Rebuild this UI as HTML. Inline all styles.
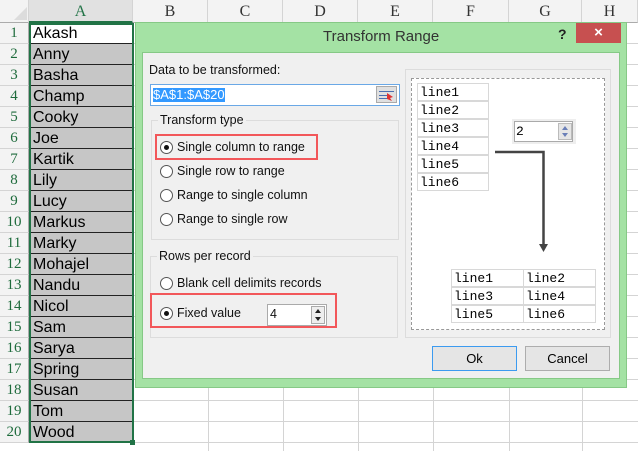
<!DOCTYPE html>
<html><head><style>
*{margin:0;padding:0;box-sizing:border-box}
html,body{width:638px;height:451px;overflow:hidden}
body{background:#fff;position:relative;font-family:"Liberation Sans",sans-serif}
.a{position:absolute}
.rh{position:absolute;left:0;width:29px;height:21px;background:#f3f3f3;border-bottom:1px solid #d4d4d4;border-right:1px solid #ababab;font-family:"Liberation Serif",serif;font-size:15px;color:#1e6b3c;text-align:center;line-height:21px}
.ch{position:absolute;top:0;height:23px;background:#f3f3f3;border-right:1px solid #d4d4d4;border-bottom:1px solid #ababab;font-family:"Liberation Serif",serif;font-size:16px;color:#333;text-align:center;line-height:23px}
.ce{position:absolute;left:29px;width:104px;height:21px;background:#c6c6c6;border-bottom:1px solid #222;font-size:16px;line-height:21px;padding-left:4px;color:#000}
.t{position:absolute;font-size:12.5px;color:#111;white-space:nowrap}
.rd{position:absolute;width:13px;height:13px;border:1px solid #555;border-radius:50%;background:#fff}
.rd.on:after{content:"";position:absolute;left:3px;top:3px;width:5px;height:5px;border-radius:50%;background:#111}
.m{font-family:"Liberation Mono",monospace;font-size:13px;color:#000}
.lc{position:absolute;border:1px solid #d8d8d8;height:18px;line-height:18px;padding-left:2px}
</style></head><body>
<div class="ch" style="left:0;width:29px"></div>
<svg class="a" style="left:14px;top:7px" width="13" height="13"><polygon points="13,0 13,13 0,13" fill="#dcdcdc"/></svg>
<div class="ch" style="left:29px;width:104px;background:#e1e1e1;border-bottom:2px solid #217346;color:#217346">A</div>
<div class="ch" style="left:133px;width:75px">B</div>
<div class="ch" style="left:208px;width:75px">C</div>
<div class="ch" style="left:283px;width:75px">D</div>
<div class="ch" style="left:358px;width:75px">E</div>
<div class="ch" style="left:433px;width:76px">F</div>
<div class="ch" style="left:509px;width:73px">G</div>
<div class="ch" style="left:582px;width:56px">H</div>
<svg class="a" style="left:133px;top:23px" width="505" height="428">
<g stroke="#d4d4d4" stroke-width="1">
<line x1="75.5" y1="0" x2="75.5" y2="429"/><line x1="150.5" y1="0" x2="150.5" y2="429"/><line x1="225.5" y1="0" x2="225.5" y2="429"/><line x1="300.5" y1="0" x2="300.5" y2="429"/><line x1="376.5" y1="0" x2="376.5" y2="429"/><line x1="449.5" y1="0" x2="449.5" y2="429"/>
<line x1="0" y1="20.5" x2="505" y2="20.5"/><line x1="0" y1="41.5" x2="505" y2="41.5"/><line x1="0" y1="62.5" x2="505" y2="62.5"/><line x1="0" y1="83.5" x2="505" y2="83.5"/><line x1="0" y1="104.5" x2="505" y2="104.5"/><line x1="0" y1="125.5" x2="505" y2="125.5"/><line x1="0" y1="146.5" x2="505" y2="146.5"/><line x1="0" y1="167.5" x2="505" y2="167.5"/><line x1="0" y1="188.5" x2="505" y2="188.5"/><line x1="0" y1="209.5" x2="505" y2="209.5"/><line x1="0" y1="230.5" x2="505" y2="230.5"/><line x1="0" y1="251.5" x2="505" y2="251.5"/><line x1="0" y1="272.5" x2="505" y2="272.5"/><line x1="0" y1="293.5" x2="505" y2="293.5"/><line x1="0" y1="314.5" x2="505" y2="314.5"/><line x1="0" y1="335.5" x2="505" y2="335.5"/><line x1="0" y1="356.5" x2="505" y2="356.5"/><line x1="0" y1="377.5" x2="505" y2="377.5"/><line x1="0" y1="398.5" x2="505" y2="398.5"/><line x1="0" y1="419.5" x2="505" y2="419.5"/>
</g></svg>
<div class="rh" style="top:23px">1</div><div class="rh" style="top:44px">2</div><div class="rh" style="top:65px">3</div><div class="rh" style="top:86px">4</div><div class="rh" style="top:107px">5</div><div class="rh" style="top:128px">6</div><div class="rh" style="top:149px">7</div><div class="rh" style="top:170px">8</div><div class="rh" style="top:191px">9</div><div class="rh" style="top:212px">10</div><div class="rh" style="top:233px">11</div><div class="rh" style="top:254px">12</div><div class="rh" style="top:275px">13</div><div class="rh" style="top:296px">14</div><div class="rh" style="top:317px">15</div><div class="rh" style="top:338px">16</div><div class="rh" style="top:359px">17</div><div class="rh" style="top:380px">18</div><div class="rh" style="top:401px">19</div><div class="rh" style="top:422px">20</div>
<div class="ce" style="top:23px;background:#fff">Akash</div>
<div class="ce" style="top:44px">Anny</div><div class="ce" style="top:65px">Basha</div><div class="ce" style="top:86px">Champ</div><div class="ce" style="top:107px">Cooky</div><div class="ce" style="top:128px">Joe</div><div class="ce" style="top:149px">Kartik</div><div class="ce" style="top:170px">Lily</div><div class="ce" style="top:191px">Lucy</div><div class="ce" style="top:212px">Markus</div><div class="ce" style="top:233px">Marky</div><div class="ce" style="top:254px">Mohajel</div><div class="ce" style="top:275px">Nandu</div><div class="ce" style="top:296px">Nicol</div><div class="ce" style="top:317px">Sam</div><div class="ce" style="top:338px">Sarya</div><div class="ce" style="top:359px">Spring</div><div class="ce" style="top:380px">Susan</div><div class="ce" style="top:401px">Tom</div><div class="ce" style="top:422px">Wood</div>
<div class="a" style="left:29px;top:23px;width:105px;height:420px;border:2px solid #217346"></div>
<div class="a" style="left:130px;top:440px;width:5px;height:5px;background:#217346"></div>
<!-- dialog -->
<div class="a" style="left:135px;top:22px;width:492px;height:366px;background:#a4e2a4;border:1px solid #86c986"></div>
<div class="a" style="left:142px;top:52px;width:478px;height:327px;background:#f0f0f0;border:1px solid #86c986"></div>
<div class="t" style="left:323px;top:28px;font-size:15px;color:#333">Transform Range</div>
<div class="t" style="left:558px;top:26px;font-size:14px;font-weight:bold;color:#222">?</div>
<div class="a" style="left:576px;top:23px;width:45px;height:20px;background:#c75050;color:#fff;text-align:center;font-size:15px;line-height:20px;font-weight:bold">×</div>
<div class="t" style="left:149px;top:63px">Data to be transformed:</div>
<div class="a" style="left:150px;top:84px;width:250px;height:22px;background:#fff;border:1px solid #6aa8e6"></div>
<div class="a" style="left:153px;top:88px;width:72px;height:14px;background:#3399ff"></div>
<div class="t" style="left:153px;top:87px;color:#fff;font-size:13px">$A$1:$A$20</div>
<div class="a" style="left:376px;top:86px;width:21px;height:17px;background:#e0e0e0;border:1px solid #aaa"></div>
<svg class="a" style="left:379px;top:89px" width="16" height="12"><g stroke="#4a6fb0"><line x1="0" y1="2.5" x2="15" y2="2.5"/><line x1="0" y1="6.5" x2="8" y2="6.5"/><line x1="0" y1="9.5" x2="8" y2="9.5"/></g><polygon points="8,4 14,8 11,9 13,12 8,10" fill="#d33"/></svg>
<div class="a" style="left:151px;top:120px;width:248px;height:120px;border:1px solid #dcdcdc"></div>
<div class="t" style="left:158px;top:113px;background:#f0f0f0;padding:0 2px">Transform type</div>
<div class="a" style="left:155px;top:134px;width:163px;height:26px;border:2px solid #f2575a"></div>
<div class="rd on" style="left:160px;top:141px"></div><div class="t" style="left:177px;top:140px">Single column to range</div>
<div class="rd" style="left:160px;top:165px"></div><div class="t" style="left:177px;top:164px">Single row to range</div>
<div class="rd" style="left:160px;top:189px"></div><div class="t" style="left:177px;top:188px">Range to single column</div>
<div class="rd" style="left:160px;top:213px"></div><div class="t" style="left:177px;top:212px">Range to single row</div>
<div class="a" style="left:150px;top:256px;width:248px;height:82px;border:1px solid #dcdcdc"></div>
<div class="t" style="left:157px;top:249px;background:#f0f0f0;padding:0 2px">Rows per record</div>
<div class="rd" style="left:160px;top:277px"></div><div class="t" style="left:177px;top:276px">Blank cell delimits records</div>
<div class="a" style="left:150px;top:293px;width:187px;height:35px;border:2px solid #f2575a"></div>
<div class="rd on" style="left:160px;top:307px"></div><div class="t" style="left:177px;top:306px">Fixed value</div>
<div class="a" style="left:267px;top:304px;width:60px;height:22px;background:#fff;border:1px solid #aaa"></div>
<div class="t" style="left:270px;top:307px">4</div>
<div class="a" style="left:311px;top:306px;width:14px;height:18px;background:#eee;border:1px solid #aaa"></div>
<svg class="a" style="left:314px;top:308px" width="8" height="14"><polygon points="4,1 7,5 1,5" fill="#222"/><polygon points="4,13 7,9 1,9" fill="#222"/></svg>
<div class="a" style="left:405px;top:69px;width:206px;height:269px;border:1px solid #dcdcdc"></div>
<div class="a" style="left:411px;top:78px;width:194px;height:252px;background:#fff;border:1px dashed #999"></div>
<div class="lc m" style="left:417px;top:83px;width:72px">line1</div>
<div class="lc m" style="left:417px;top:101px;width:72px">line2</div>
<div class="lc m" style="left:417px;top:119px;width:72px">line3</div>
<div class="lc m" style="left:417px;top:137px;width:72px">line4</div>
<div class="lc m" style="left:417px;top:155px;width:72px">line5</div>
<div class="lc m" style="left:417px;top:173px;width:72px">line6</div>
<div class="a" style="left:512px;top:119px;width:64px;height:25px;background:#eee"></div>
<div class="a" style="left:514px;top:121px;width:59px;height:21px;background:#fff;border:1px solid #aaa"></div>
<div class="t m" style="left:516px;top:124px">2</div>
<div class="a" style="left:558px;top:123px;width:14px;height:17px;background:#e6e6e6;border:1px solid #bbb"></div>
<svg class="a" style="left:561px;top:125px" width="8" height="14"><polygon points="4,1 7,5 1,5" fill="#6a7fb8"/><polygon points="4,12 7,8 1,8" fill="#6a7fb8"/></svg>
<svg class="a" style="left:490px;top:148px" width="60" height="110"><polyline points="5,4 53.5,4 53.5,98" fill="none" stroke="#444" stroke-width="2.5"/><polygon points="49,96 58,96 53.5,104" fill="#444"/></svg>
<div class="lc m" style="left:451px;top:269px;width:73px">line1</div><div class="lc m" style="left:523px;top:269px;width:73px">line2</div>
<div class="lc m" style="left:451px;top:287px;width:73px">line3</div><div class="lc m" style="left:523px;top:287px;width:73px">line4</div>
<div class="lc m" style="left:451px;top:305px;width:73px">line5</div><div class="lc m" style="left:523px;top:305px;width:73px">line6</div>
<div class="a" style="left:432px;top:346px;width:85px;height:25px;background:#e5e5e5;border:1px solid #3c9bf0;text-align:center;line-height:23px;font-size:13px">Ok</div>
<div class="a" style="left:525px;top:346px;width:85px;height:25px;background:#e5e5e5;border:1px solid #adadad;text-align:center;line-height:23px;font-size:13px">Cancel</div>
</body></html>
